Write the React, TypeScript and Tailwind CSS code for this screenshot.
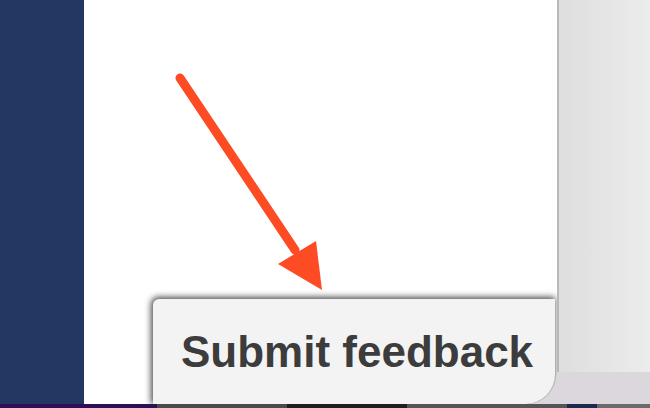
export default function App() {
  return (
    <main className="flex h-[408px] w-[650px] flex-col overflow-hidden bg-[#dcd7dc] font-['Liberation_Sans',Arial,sans-serif]">
      <div className="flex h-[404px]">
        <aside className="w-[84px] bg-[#223761]" />
        <section className="flex w-[473px] flex-col overflow-hidden rounded-br-[30px] bg-white">
          <svg width="473" height="299" viewBox="0 0 473 299" className="block shrink-0">
            <line x1="96" y1="78" x2="211" y2="250" stroke="#fd4b23" strokeWidth="9" strokeLinecap="round" />
            <polygon points="194,264 232,241 238,290" fill="#fd4b23" />
          </svg>
          <button className="relative ml-[69px] mr-[2px] flex flex-1 items-start rounded-tl-[6px] rounded-br-[30px] bg-[#f3f3f3] pl-[28px] pt-[31px] text-left text-[44px] font-bold leading-[44px] text-[#3c3c3c] shadow-[-1px_-1px_6px_1px_rgba(0,0,0,0.7)]">
            Submit feedback
          </button>
        </section>
        <div className="flex flex-1 flex-col">
          <div className="h-[372px] border-l-2 border-[#b9b9b9] bg-gradient-to-r from-[#dedede] to-[#ececec]" />
        </div>
      </div>
      <footer className="flex h-[4px]">
        <div className="w-[157px] bg-[#2c0f55]" />
        <div className="w-[130px] bg-[#4a4a4a]" />
        <div className="w-[120px] bg-[#1e1e1e]" />
        <div className="w-[160px] bg-[#555555]" />
        <div className="w-[30px] bg-[#1b2a4a]" />
        <div className="flex-1 bg-[#6a6a6a]" />
      </footer>
    </main>
  );
}
